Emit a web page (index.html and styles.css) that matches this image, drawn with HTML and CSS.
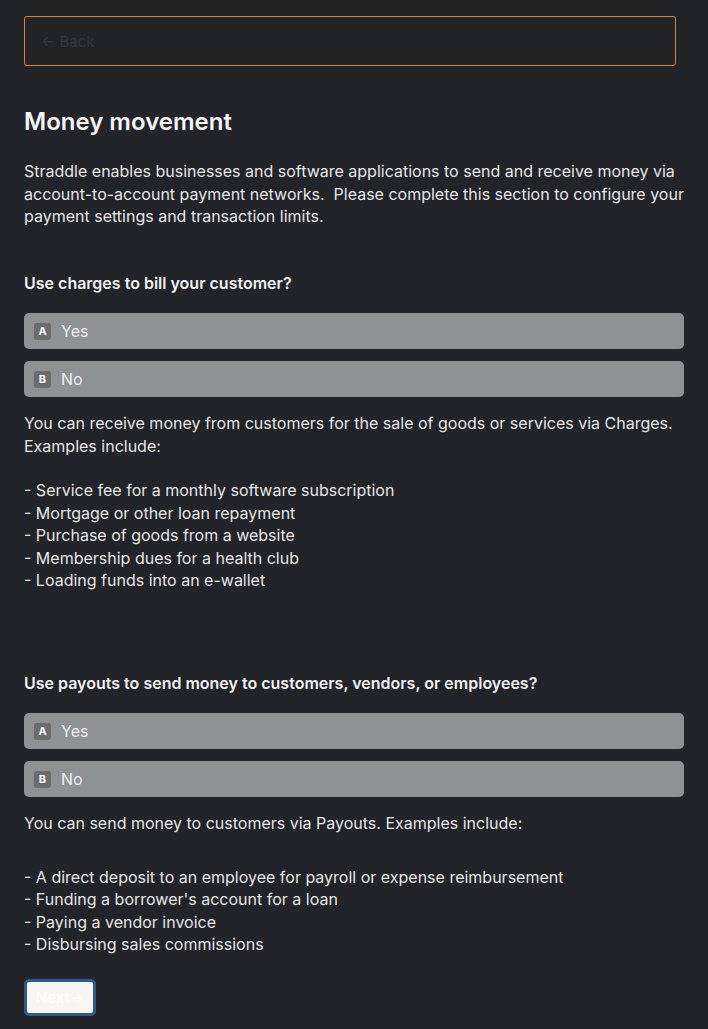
FILE: index.html
```html
<!DOCTYPE html>
<html lang="en">
<head>
    <meta charset="UTF-8">
    <meta name="viewport" content="width=device-width, initial-scale=1.0">
    <title>Money movement</title>
    <link rel="stylesheet" href="styles.css">
</head>
<body>
    <div class="page">
        <button class="back-btn">&larr; Back</button>

        <h1>Money movement</h1>
        <p class="intro">Straddle enables businesses and software applications to send and receive money via account-to-account payment networks.&nbsp; Please complete this section to configure your payment settings and transaction limits.</p>

        <div class="question q-charges">
            <h2>Use charges to bill your customer?</h2>
            <div class="options">
                <div class="option"><span class="key">A</span>Yes</div>
                <div class="option"><span class="key">B</span>No</div>
            </div>
            <p class="help">You can receive money from customers for the sale of goods or services via Charges. Examples include:</p>
            <ul class="examples">
                <li>- Service fee for a monthly software subscription</li>
                <li>- Mortgage or other loan repayment</li>
                <li>- Purchase of goods from a website</li>
                <li>- Membership dues for a health club</li>
                <li>- Loading funds into an e-wallet</li>
            </ul>
        </div>

        <div class="question q-payouts">
            <h2>Use payouts to send money to customers, vendors, or employees?</h2>
            <div class="options">
                <div class="option"><span class="key">A</span>Yes</div>
                <div class="option"><span class="key">B</span>No</div>
            </div>
            <p class="help">You can send money to customers via Payouts. Examples include:</p>
            <ul class="examples">
                <li>- A direct deposit to an employee for payroll or expense reimbursement</li>
                <li>- Funding a borrower's account for a loan</li>
                <li>- Paying a vendor invoice</li>
                <li>- Disbursing sales commissions</li>
            </ul>
        </div>

        <button class="next-btn">Next&rarr;</button>
    </div>
</body>
</html>
```

FILE: styles.css
```css
body {
    margin: 0;
    padding: 0;
    background: #232428;
    color: #e6e6e6;
    font-family: Inter, "Liberation Sans", sans-serif;
    font-size: 16px;
    line-height: 22.5px;
}
.page {
    padding: 16px 24px 12px 24px;
    display: flex;
    flex-direction: column;
    align-items: flex-start;
}
.back-btn {
    width: 652px;
    height: 50px;
    box-sizing: border-box;
    background: #232428;
    border: 1px solid #d9823f;
    border-radius: 3px;
    color: #34363b;
    font-family: inherit;
    font-size: 15px;
    text-align: left;
    padding: 0 16px;
}
h1 {
    margin: 41px 0 0 0;
    font-size: 24px;
    line-height: 30px;
    font-weight: 600;
    color: #f5f5f5;
}
.intro {
    margin: 23px 0 0 0;
}
.question {
    align-self: stretch;
}
.q-charges {
    margin-top: 44px;
}
.q-payouts {
    margin-top: 80px;
}
h2 {
    margin: 0;
    font-size: 16px;
    line-height: 22.5px;
    font-weight: 600;
    color: #f0f0f0;
}
.options {
    margin-top: 19px;
    display: flex;
    flex-direction: column;
    gap: 12px;
}
.option {
    height: 36px;
    background: #909193;
    border-radius: 5px;
    display: flex;
    align-items: center;
    padding-left: 10px;
    color: #f0f0f0;
}
.key {
    width: 17px;
    height: 17px;
    margin-right: 10px;
    background: #6c6c6d;
    border-radius: 3px;
    color: #fff;
    font-size: 11px;
    font-weight: 700;
    line-height: 17px;
    text-align: center;
}
.help {
    margin: 15px 0 0 0;
}
.examples {
    list-style: none;
    margin: 22px 0 0 0;
    padding: 0;
}
.q-payouts .examples {
    margin-top: 31px;
}
.next-btn {
    margin-top: 23px;
    width: 72px;
    height: 37px;
    box-sizing: border-box;
    background: #f8f6f3;
    border: 3px solid #2e5b8f;
    border-radius: 5px;
    color: #fdfcfb;
    font-family: inherit;
    font-size: 15px;
    font-weight: 700;
    padding: 0;
}
```
